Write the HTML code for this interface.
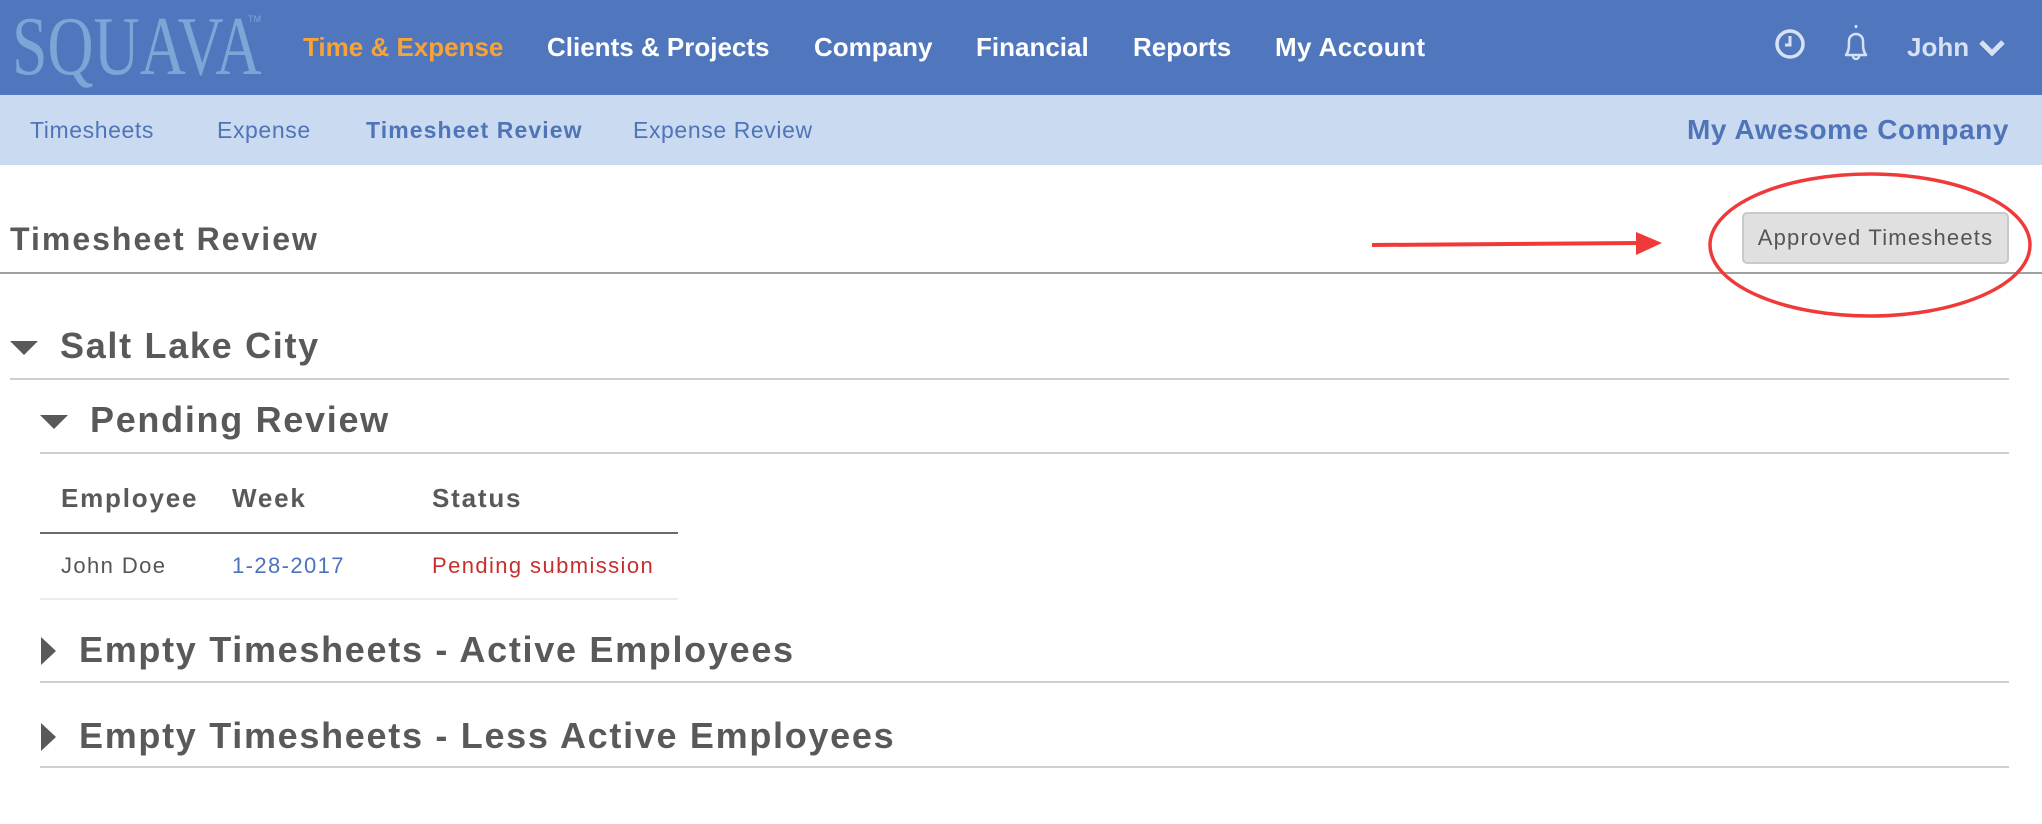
<!DOCTYPE html>
<html><head><meta charset="utf-8"><style>
*{margin:0;padding:0;box-sizing:border-box}
body{width:2042px;height:824px;position:relative;background:#fff;font-family:"Liberation Sans",sans-serif;overflow:hidden;color:#555}
.a{position:absolute;white-space:nowrap}
#hd{position:absolute;left:0;top:0;width:2042px;height:95px;background:#5077bd}
#sn{position:absolute;left:0;top:95px;width:2042px;height:70px;background:#cadaf0}
.nav{font-weight:bold;font-size:26px;color:#fff;top:30px;line-height:34px}
.sub{font-size:23px;color:#4f74b8;top:115px;line-height:30px;letter-spacing:0.6px}
.h{font-weight:bold;color:#595959}
.big{font-size:36px;line-height:44px;letter-spacing:1.7px}
.th{font-size:26px;line-height:32px;letter-spacing:1.8px}
.td{font-size:22px;line-height:28px;letter-spacing:1.4px}
.ln{position:absolute;height:2px;background:#cfcfcf}
</style></head><body>
<div id="hd"></div><div id="sn"></div>
<div class="a" style="left:12px;top:4px;font-family:'Liberation Serif',serif;font-size:84px;line-height:86px;color:#7da5d5;transform:scaleX(0.76);transform-origin:left">SQUAVA</div>
<div class="a" style="left:248px;top:14px;font-size:9px;color:#7da5d5">TM</div>
<div class="a nav" style="left:303px;color:#f7a336">Time &amp; Expense</div>
<div class="a nav" style="left:547px">Clients &amp; Projects</div>
<div class="a nav" style="left:814px">Company</div>
<div class="a nav" style="left:976px">Financial</div>
<div class="a nav" style="left:1133px">Reports</div>
<div class="a nav" style="left:1275px;letter-spacing:0.4px">My Account</div>
<svg class="a" style="left:1772px;top:26px" width="36" height="36" viewBox="0 0 36 36"><circle cx="18" cy="18" r="13" fill="none" stroke="#d6e2f4" stroke-width="3.5"/><path d="M18 10v9h-5" fill="none" stroke="#d6e2f4" stroke-width="3"/></svg>
<svg class="a" style="left:1838px;top:22px" width="36" height="42" viewBox="0 0 36 42"><path d="M18 3v3M8 33c3-4 3-8 3-14a7 7 0 0 1 14 0c0 6 0 10 3 14z M15 34a3 3 0 0 0 6 0" fill="none" stroke="#d6e2f4" stroke-width="2.5" stroke-linejoin="round"/></svg>
<div class="a nav" style="left:1907px;color:#d6e2f4">John</div>
<svg class="a" style="left:1978px;top:38px" width="28" height="20" viewBox="0 0 28 20"><path d="M3 4l11 11 11-11" fill="none" stroke="#d6e2f4" stroke-width="5"/></svg>
<div class="a sub" style="left:30px">Timesheets</div>
<div class="a sub" style="left:217px">Expense</div>
<div class="a sub" style="left:366px;font-weight:bold;letter-spacing:1.1px">Timesheet Review</div>
<div class="a sub" style="left:633px">Expense Review</div>
<div class="a" style="right:33px;top:113px;font-size:28px;line-height:34px;font-weight:bold;color:#4f74b8;letter-spacing:0.6px">My Awesome Company</div>
<div class="a h" style="left:10px;top:220px;font-size:32px;line-height:38px;letter-spacing:2px">Timesheet Review</div>
<div class="ln" style="left:0;top:272px;width:2042px;background:#a0a0a0"></div>
<div class="a" style="left:1742px;top:212px;width:267px;height:52px;background:#e0e0e0;border:2px solid #c9c9c9;border-radius:5px;font-size:22px;line-height:48px;text-align:center;color:#555;letter-spacing:1.2px">Approved Timesheets</div>
<svg class="a" style="left:0;top:0" width="2042" height="824"><path d="M1372 245L1640 243" stroke="#f03a3a" stroke-width="4"/><path d="M1636 232l26 11-26 12z" fill="#f03a3a"/><ellipse cx="1870" cy="245" rx="160" ry="71" fill="none" stroke="#f03a3a" stroke-width="3.5"/></svg>
<svg class="a" style="left:10px;top:340px" width="30" height="16"><path d="M0 1h28L14 15z" fill="#595959"/></svg>
<div class="a h big" style="left:60px;top:324px">Salt Lake City</div>
<div class="ln" style="left:10px;top:378px;width:1999px"></div>
<svg class="a" style="left:40px;top:414px" width="30" height="16"><path d="M0 1h28L14 15z" fill="#595959"/></svg>
<div class="a h big" style="left:90px;top:398px">Pending Review</div>
<div class="ln" style="left:40px;top:452px;width:1969px"></div>
<div class="a h th" style="left:61px;top:482px">Employee</div>
<div class="a h th" style="left:232px;top:482px">Week</div>
<div class="a h th" style="left:432px;top:482px">Status</div>
<div class="ln" style="left:40px;top:532px;width:638px;background:#6a6a6a"></div>
<div class="a td" style="left:61px;top:552px;color:#555">John Doe</div>
<div class="a td" style="left:232px;top:552px;color:#4a72be">1-28-2017</div>
<div class="a td" style="left:432px;top:552px;color:#c5302f">Pending submission</div>
<div class="ln" style="left:40px;top:598px;width:638px;background:#ececec"></div>
<svg class="a" style="left:40px;top:637px" width="18" height="28"><path d="M1 0v28l15-14z" fill="#595959"/></svg>
<div class="a h big" style="left:79px;top:628px">Empty Timesheets - Active Employees</div>
<div class="ln" style="left:40px;top:681px;width:1969px"></div>
<svg class="a" style="left:40px;top:723px" width="18" height="28"><path d="M1 0v28l15-14z" fill="#595959"/></svg>
<div class="a h big" style="left:79px;top:714px">Empty Timesheets - Less Active Employees</div>
<div class="ln" style="left:40px;top:766px;width:1969px"></div>
</body></html>
